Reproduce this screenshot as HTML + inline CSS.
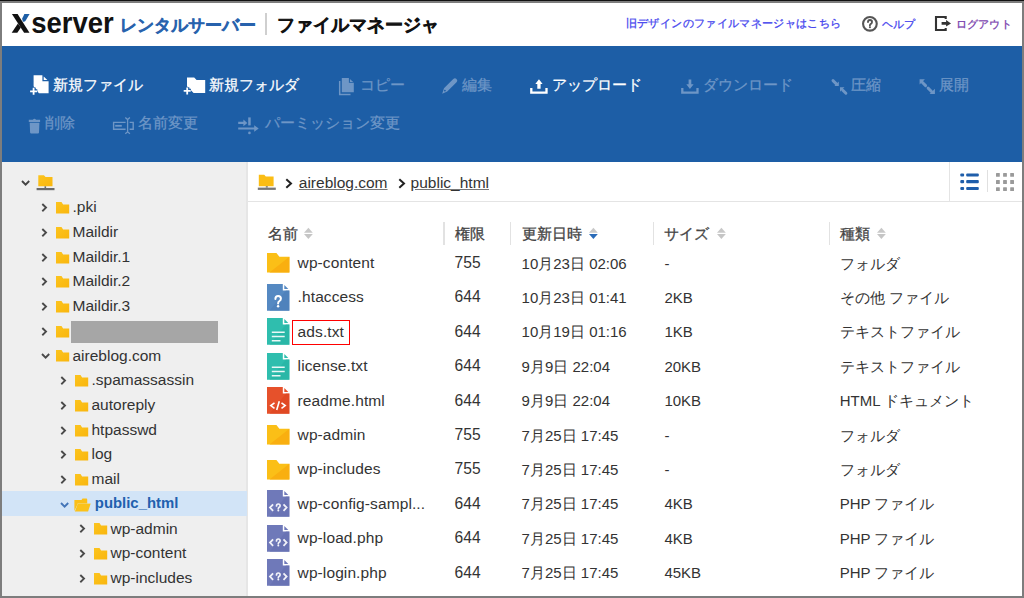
<!DOCTYPE html><html><head><meta charset="utf-8"><style>
*{margin:0;padding:0;box-sizing:border-box}
html,body{width:1024px;height:598px;overflow:hidden;background:#fff}
body{position:relative;font-family:"Liberation Sans",sans-serif}
.t{position:absolute;white-space:nowrap}
.a{position:absolute}
svg{position:absolute;overflow:visible}
</style></head><body>
<div class="a" style="left:0;top:0;width:1024px;height:598px;background:#fff"></div>
<svg width="0" height="0" style="position:absolute"><defs><linearGradient id="fg" x1="0" y1="0" x2="1" y2="1"><stop offset="0" stop-color="#fcc41e"/><stop offset="1" stop-color="#f9b60e"/></linearGradient></defs></svg>
<svg style="left:0;top:0" width="130" height="46" viewBox="0 0 130 46">
<path d="M11.9 14.1 L17.6 14.1 L29.5 32.8 L24.1 32.8 Z" fill="#111"/>
<path d="M11.7 32.8 L17.3 32.8 L20.9 27.4 L17.9 23.4 Z" fill="#111"/>
<path d="M24.4 14.1 L29.6 14.1 L25.4 20.9 Q24.0 22.4 22.8 21.2 L22.1 18.8 Z" fill="#1d5ea6"/>
<text x="31.2" y="32.8" font-family="Liberation Sans" font-weight="bold" font-size="28.6" fill="#111" textLength="82.5" lengthAdjust="spacingAndGlyphs">server</text>
</svg>
<div class="t" style="left:119.5px;top:17.11px;font-size:17px;line-height:17px;color:#2762ad;font-weight:normal;-webkit-text-stroke:1.1px #2762ad">レンタルサーバー</div>
<div class="a" style="left:264.5px;top:12.5px;width:2px;height:22px;background:#cfcfcf"></div>
<div class="t" style="left:276.5px;top:16.60px;font-size:17.6px;line-height:17.6px;color:#111;font-weight:normal;-webkit-text-stroke:1.2px #111">ファイルマネージャ</div>
<div class="t" style="left:625.8px;top:17.99px;font-size:11px;line-height:11px;color:#4747ee;font-weight:normal;letter-spacing:0.35px;-webkit-text-stroke:0.3px #4747ee">旧デザインのファイルマネージャはこちら</div>
<svg style="left:862px;top:16px" width="16" height="16" viewBox="0 0 16 16">
<circle cx="7.9" cy="7.8" r="6.85" fill="none" stroke="#555" stroke-width="2.1"/>
<path d="M6 6.1 Q6 4 7.95 4 Q10 4 10 5.9 Q10 7.2 8.9 7.8 Q7.9 8.4 7.9 9.5" fill="none" stroke="#555" stroke-width="1.9" stroke-linecap="round"/>
<circle cx="7.9" cy="11.3" r="1.05" fill="#555"/>
</svg>
<div class="t" style="left:881.5px;top:19.29px;font-size:11px;line-height:11px;color:#4747ee;font-weight:normal;letter-spacing:0.3px;-webkit-text-stroke:0.3px #4747ee">ヘルプ</div>
<svg style="left:934px;top:15px" width="18" height="17" viewBox="0 0 18 17">
<path d="M11.7 4 V2.05 H2 V15.05 H11.7 V13" fill="none" stroke="#333" stroke-width="2.1"/>
<path d="M7.6 7.1 H12.1 V4.9 L17 8.4 L12.1 11.6 V9.7 H7.6 Z" fill="#333"/>
</svg>
<div class="t" style="left:955.8px;top:19.29px;font-size:11px;line-height:11px;color:#7a3fae;font-weight:normal;letter-spacing:0.2px;-webkit-text-stroke:0.3px #7a3fae">ログアウト</div>
<div class="a" style="left:0;top:46px;width:1024px;height:116px;background:#1d5ea6"></div>
<svg style="left:29px;top:74px" width="22" height="22" viewBox="0 0 22 22">
<path d="M4.6 1.3 H13.4 V7.2 H19.6 V19.3 H9.9 L4.6 12.2 Z" fill="#fff"/>
<path d="M14.7 2.5 L18.4 6 H14.7 Z" fill="#fff"/>
<path d="M0.9 17.3 H8.3 M4.6 13.6 V21" stroke="#1d5ea6" stroke-width="4.2"/>
<path d="M1.1 17.3 H8.1 M4.6 13.8 V20.8" stroke="#fff" stroke-width="1.8"/>
</svg>
<div class="t" style="left:53px;top:77.30px;font-size:15px;line-height:15px;color:#fff;font-weight:normal;-webkit-text-stroke:0.25px #fff">新規ファイル</div>
<svg style="left:182px;top:74px" width="26" height="22" viewBox="0 0 26 22">
<path d="M5 3.4 H12.2 L14.6 6 H23.2 V18.9 H11.6 L5 12.2 Z" fill="#fff"/>
<path d="M1.5 16.9 H8.9 M5.2 13.2 V20.6" stroke="#1d5ea6" stroke-width="4.2"/>
<path d="M1.7 16.9 H8.7 M5.2 13.4 V20.4" stroke="#fff" stroke-width="1.8"/>
</svg>
<div class="t" style="left:209.3px;top:77.30px;font-size:15px;line-height:15px;color:#fff;font-weight:normal;-webkit-text-stroke:0.25px #fff">新規フォルダ</div>
<svg style="left:338px;top:77px" width="18" height="20" viewBox="0 0 18 20">
<path d="M1.7 4 V17.6 H12.5" fill="none" stroke="#6e96c6" stroke-width="1.5"/>
<path d="M3.8 1.1 H10.9 V5.8 H15.8 V15.3 H3.8 Z" fill="#6e96c6"/>
<path d="M11.9 1.9 L15.2 5 H11.9 Z" fill="#6e96c6"/>
</svg>
<div class="t" style="left:360px;top:77.30px;font-size:15px;line-height:15px;color:#6e96c6;font-weight:normal;-webkit-text-stroke:0.25px #6e96c6">コピー</div>
<svg style="left:441px;top:78px" width="18" height="18" viewBox="0 0 18 18">
<path d="M12.27 0.97 A2.3 2.3 0 0 1 15.53 4.23 L6.23 13.53 L1.2 15.8 L2.97 10.27 Z" fill="#6e96c6"/>
<circle cx="3.9" cy="12.6" r="0.9" fill="#1d5ea6"/>
</svg>
<div class="t" style="left:462px;top:77.30px;font-size:15px;line-height:15px;color:#6e96c6;font-weight:normal;-webkit-text-stroke:0.25px #6e96c6">編集</div>
<svg style="left:530px;top:79px" width="18" height="16" viewBox="0 0 18 16">
<path d="M1.3 8.9 V13.6 H16.5 V8.9" fill="none" stroke="#fff" stroke-width="2.3"/>
<path d="M5.3 5.1 L8.95 0.2 L12.6 5.1 H10.6 V9.7 H7.3 V5.1 Z" fill="#fff"/>
</svg>
<div class="t" style="left:552.4px;top:77.30px;font-size:15px;line-height:15px;color:#fff;font-weight:normal;-webkit-text-stroke:0.25px #fff">アップロード</div>
<svg style="left:680.5px;top:79px" width="18" height="16" viewBox="0 0 18 16">
<path d="M1.3 8.9 V13.6 H16.5 V8.9" fill="none" stroke="#6e96c6" stroke-width="2.3"/>
<path d="M5.3 5.2 L8.95 10.1 L12.6 5.2 H10.3 V0.6 H7.6 V5.2 Z" fill="#6e96c6"/>
</svg>
<div class="t" style="left:703.3px;top:77.30px;font-size:15px;line-height:15px;color:#6e96c6;font-weight:normal;-webkit-text-stroke:0.25px #6e96c6">ダウンロード</div>
<svg style="left:831px;top:78px" width="17" height="17" viewBox="0 0 17 17">
<path d="M2 2.6 L5.8 6.4 M14.9 15.3 L11.8 12.2" stroke="#6e96c6" stroke-width="2.9" stroke-linecap="round"/>
<path d="M7.8 3.6 V8 H3.4 Z M9 9.3 H13.5 L9 13.7 Z" fill="#6e96c6"/>
</svg>
<div class="t" style="left:851.3px;top:77.30px;font-size:15px;line-height:15px;color:#6e96c6;font-weight:normal;-webkit-text-stroke:0.25px #6e96c6">圧縮</div>
<svg style="left:919px;top:78px" width="17" height="17" viewBox="0 0 17 17">
<path d="M3.2 4.2 L6.6 7.6 M9.1 10.1 L12.5 13.5" stroke="#6e96c6" stroke-width="2.9" stroke-linecap="round"/>
<path d="M0.6 1.2 H5.9 L0.6 6.5 Z M15.9 10.8 V16.1 H10.6 Z" fill="#6e96c6"/>
</svg>
<div class="t" style="left:938.8px;top:77.30px;font-size:15px;line-height:15px;color:#6e96c6;font-weight:normal;-webkit-text-stroke:0.25px #6e96c6">展開</div>
<svg style="left:28px;top:117px" width="13" height="17" viewBox="0 0 13 17">
<path d="M0.8 2.8 H12.1 V5 H0.8 Z M4.8 2.8 Q6.45 0.6 8.1 2.8 Z" fill="#6e96c6"/>
<path d="M1.7 5.7 H11.4 L11 15.5 Q10.9 16.5 9.9 16.5 H3.2 Q2.2 16.5 2.1 15.5 Z" fill="#6e96c6"/>
</svg>
<div class="t" style="left:45px;top:115.30px;font-size:15px;line-height:15px;color:#6e96c6;font-weight:normal;-webkit-text-stroke:0.25px #6e96c6">削除</div>
<svg style="left:112px;top:117px" width="24" height="18" viewBox="0 0 24 18">
<path d="M13.6 5.4 H1.6 V12.3 H13.6 M17.6 5.4 H21.2 V12.3 H17.6" fill="none" stroke="#6e96c6" stroke-width="1.4"/>
<path d="M3.2 7.9 H9.8 V9.7 H3.2 Z" fill="#6e96c6"/>
<path d="M15.6 2.2 V15.2 M13.3 0.6 L15.6 2.6 L17.9 0.6 M13.3 16.8 L15.6 14.8 L17.9 16.8" fill="none" stroke="#6e96c6" stroke-width="1.3"/>
</svg>
<div class="t" style="left:138.4px;top:115.30px;font-size:15px;line-height:15px;color:#6e96c6;font-weight:normal;-webkit-text-stroke:0.25px #6e96c6">名前変更</div>
<svg style="left:237px;top:117px" width="23" height="18" viewBox="0 0 23 18">
<g fill="#6e96c6"><path d="M1.2 4.8 H7.5 V7 H1.2 Z M6.4 2.6 L10.3 5.9 L6.4 9.2 Z"/>
<rect x="11.2" y="0.4" width="2.5" height="8"/>
<path d="M1.2 10.4 H18 V12.6 H1.2 Z M17.2 8.2 L21.7 11.5 L17.2 14.8 Z"/>
<circle cx="12.45" cy="15.9" r="1.3"/></g>
</svg>
<div class="t" style="left:265px;top:115.30px;font-size:15px;line-height:15px;color:#6e96c6;font-weight:normal;-webkit-text-stroke:0.25px #6e96c6">パーミッション変更</div>
<div class="a" style="left:0;top:162px;width:247px;height:436px;background:#efefef"></div>
<div class="a" style="left:246px;top:162px;width:2px;height:436px;background:#e6e6e6"></div>
<div class="a" style="left:2px;top:490.86px;width:244.5px;height:24.72px;background:#d2e4f7"></div>
<svg style="left:21px;top:180.20px" width="10" height="6" viewBox="0 0 10 6">
<path d="M1 1 L4.6 4.6 L8.2 1" fill="none" stroke="#444" stroke-width="1.9"/></svg>
<svg style="left:36px;top:174px" width="20" height="18" viewBox="0 0 20 18">
<path d="M2.3 1.2 H7.9 L9.6 3.1 H16.5 V12.3 H2.3 Z" fill="url(#fg)"/>
<path d="M0.6 14 H18.5 V16.2 H0.6 Z" fill="#6a6a6a"/><path d="M8.5 12.3 H10.1 V14 H8.5Z" fill="#6a6a6a"/>
</svg>
<svg style="left:41.0px;top:203.12px" width="7" height="10" viewBox="0 0 7 10">
<path d="M1.3 1 L5 4.6 L1.3 8.2" fill="none" stroke="#4a4a4a" stroke-width="1.9"/></svg>
<svg style="left:55.7px;top:202.12px" width="14" height="12" viewBox="0 0 14 12">
<path d="M0 0 H5.5 L7.1 2.4 H13.2 V11.4 H0 Z" fill="url(#fg)"/></svg>
<div class="t" style="left:72.5px;top:199.20px;font-size:15.5px;line-height:15.5px;color:#333;font-weight:normal;">.pki</div>
<svg style="left:41.0px;top:227.84px" width="7" height="10" viewBox="0 0 7 10">
<path d="M1.3 1 L5 4.6 L1.3 8.2" fill="none" stroke="#4a4a4a" stroke-width="1.9"/></svg>
<svg style="left:55.7px;top:226.84px" width="14" height="12" viewBox="0 0 14 12">
<path d="M0 0 H5.5 L7.1 2.4 H13.2 V11.4 H0 Z" fill="url(#fg)"/></svg>
<div class="t" style="left:72.5px;top:223.92px;font-size:15.5px;line-height:15.5px;color:#333;font-weight:normal;">Maildir</div>
<svg style="left:41.0px;top:252.56px" width="7" height="10" viewBox="0 0 7 10">
<path d="M1.3 1 L5 4.6 L1.3 8.2" fill="none" stroke="#4a4a4a" stroke-width="1.9"/></svg>
<svg style="left:55.7px;top:251.56px" width="14" height="12" viewBox="0 0 14 12">
<path d="M0 0 H5.5 L7.1 2.4 H13.2 V11.4 H0 Z" fill="url(#fg)"/></svg>
<div class="t" style="left:72.5px;top:248.64px;font-size:15.5px;line-height:15.5px;color:#333;font-weight:normal;">Maildir.1</div>
<svg style="left:41.0px;top:277.28px" width="7" height="10" viewBox="0 0 7 10">
<path d="M1.3 1 L5 4.6 L1.3 8.2" fill="none" stroke="#4a4a4a" stroke-width="1.9"/></svg>
<svg style="left:55.7px;top:276.28px" width="14" height="12" viewBox="0 0 14 12">
<path d="M0 0 H5.5 L7.1 2.4 H13.2 V11.4 H0 Z" fill="url(#fg)"/></svg>
<div class="t" style="left:72.5px;top:273.36px;font-size:15.5px;line-height:15.5px;color:#333;font-weight:normal;">Maildir.2</div>
<svg style="left:41.0px;top:302.00px" width="7" height="10" viewBox="0 0 7 10">
<path d="M1.3 1 L5 4.6 L1.3 8.2" fill="none" stroke="#4a4a4a" stroke-width="1.9"/></svg>
<svg style="left:55.7px;top:301.00px" width="14" height="12" viewBox="0 0 14 12">
<path d="M0 0 H5.5 L7.1 2.4 H13.2 V11.4 H0 Z" fill="url(#fg)"/></svg>
<div class="t" style="left:72.5px;top:298.08px;font-size:15.5px;line-height:15.5px;color:#333;font-weight:normal;">Maildir.3</div>
<svg style="left:41.0px;top:326.72px" width="7" height="10" viewBox="0 0 7 10">
<path d="M1.3 1 L5 4.6 L1.3 8.2" fill="none" stroke="#4a4a4a" stroke-width="1.9"/></svg>
<svg style="left:55.7px;top:325.72px" width="14" height="12" viewBox="0 0 14 12">
<path d="M0 0 H5.5 L7.1 2.4 H13.2 V11.4 H0 Z" fill="url(#fg)"/></svg>
<div class="a" style="left:71px;top:321px;width:147px;height:21.8px;background:#a6a6a6"></div>
<svg style="left:40.5px;top:353.24px" width="10" height="6" viewBox="0 0 10 6">
<path d="M1 1 L4.6 4.6 L8.2 1" fill="none" stroke="#4a4a4a" stroke-width="1.9"/></svg>
<svg style="left:55.7px;top:350.44px" width="14" height="12" viewBox="0 0 14 12">
<path d="M0 0 H5.5 L7.1 2.4 H13.2 V11.4 H0 Z" fill="url(#fg)"/></svg>
<div class="t" style="left:72.5px;top:347.52px;font-size:15.5px;line-height:15.5px;color:#333;font-weight:normal;">aireblog.com</div>
<svg style="left:60.0px;top:376.16px" width="7" height="10" viewBox="0 0 7 10">
<path d="M1.3 1 L5 4.6 L1.3 8.2" fill="none" stroke="#4a4a4a" stroke-width="1.9"/></svg>
<svg style="left:74.7px;top:375.16px" width="14" height="12" viewBox="0 0 14 12">
<path d="M0 0 H5.5 L7.1 2.4 H13.2 V11.4 H0 Z" fill="url(#fg)"/></svg>
<div class="t" style="left:91.5px;top:372.24px;font-size:15.5px;line-height:15.5px;color:#333;font-weight:normal;">.spamassassin</div>
<svg style="left:60.0px;top:400.88px" width="7" height="10" viewBox="0 0 7 10">
<path d="M1.3 1 L5 4.6 L1.3 8.2" fill="none" stroke="#4a4a4a" stroke-width="1.9"/></svg>
<svg style="left:74.7px;top:399.88px" width="14" height="12" viewBox="0 0 14 12">
<path d="M0 0 H5.5 L7.1 2.4 H13.2 V11.4 H0 Z" fill="url(#fg)"/></svg>
<div class="t" style="left:91.5px;top:396.96px;font-size:15.5px;line-height:15.5px;color:#333;font-weight:normal;">autoreply</div>
<svg style="left:60.0px;top:425.60px" width="7" height="10" viewBox="0 0 7 10">
<path d="M1.3 1 L5 4.6 L1.3 8.2" fill="none" stroke="#4a4a4a" stroke-width="1.9"/></svg>
<svg style="left:74.7px;top:424.60px" width="14" height="12" viewBox="0 0 14 12">
<path d="M0 0 H5.5 L7.1 2.4 H13.2 V11.4 H0 Z" fill="url(#fg)"/></svg>
<div class="t" style="left:91.5px;top:421.68px;font-size:15.5px;line-height:15.5px;color:#333;font-weight:normal;">htpasswd</div>
<svg style="left:60.0px;top:450.32px" width="7" height="10" viewBox="0 0 7 10">
<path d="M1.3 1 L5 4.6 L1.3 8.2" fill="none" stroke="#4a4a4a" stroke-width="1.9"/></svg>
<svg style="left:74.7px;top:449.32px" width="14" height="12" viewBox="0 0 14 12">
<path d="M0 0 H5.5 L7.1 2.4 H13.2 V11.4 H0 Z" fill="url(#fg)"/></svg>
<div class="t" style="left:91.5px;top:446.40px;font-size:15.5px;line-height:15.5px;color:#333;font-weight:normal;">log</div>
<svg style="left:60.0px;top:475.04px" width="7" height="10" viewBox="0 0 7 10">
<path d="M1.3 1 L5 4.6 L1.3 8.2" fill="none" stroke="#4a4a4a" stroke-width="1.9"/></svg>
<svg style="left:74.7px;top:474.04px" width="14" height="12" viewBox="0 0 14 12">
<path d="M0 0 H5.5 L7.1 2.4 H13.2 V11.4 H0 Z" fill="url(#fg)"/></svg>
<div class="t" style="left:91.5px;top:471.12px;font-size:15.5px;line-height:15.5px;color:#333;font-weight:normal;">mail</div>
<svg style="left:59.5px;top:501.56px" width="10" height="6" viewBox="0 0 10 6">
<path d="M1 1 L4.6 4.6 L8.2 1" fill="none" stroke="#4475b8" stroke-width="1.9"/></svg>
<svg style="left:74px;top:497.36px" width="18" height="16" viewBox="0 0 18 16">
<path d="M0.4 3 H7.6 Q8 1.6 9 1.6 H12.4 Q13.2 1.6 13.2 2.6 V6.8 H3.8 L0.4 14 Z" fill="#fbbf17"/>
<path d="M3.6 6.2 H16.8 L16.6 6.8 H3.4 Z" fill="#f3dc8c"/>
<path d="M3.8 6.8 H16.6 L14.1 14.4 H0.9 Z" fill="#fbc21a"/></svg>
<div class="t" style="left:94.8px;top:496.35px;font-size:14.9px;line-height:14.9px;color:#2160ae;font-weight:bold;">public_html</div>
<svg style="left:79.0px;top:524.48px" width="7" height="10" viewBox="0 0 7 10">
<path d="M1.3 1 L5 4.6 L1.3 8.2" fill="none" stroke="#4a4a4a" stroke-width="1.9"/></svg>
<svg style="left:93.7px;top:523.48px" width="14" height="12" viewBox="0 0 14 12">
<path d="M0 0 H5.5 L7.1 2.4 H13.2 V11.4 H0 Z" fill="url(#fg)"/></svg>
<div class="t" style="left:110.5px;top:520.56px;font-size:15.5px;line-height:15.5px;color:#333;font-weight:normal;">wp-admin</div>
<svg style="left:79.0px;top:549.20px" width="7" height="10" viewBox="0 0 7 10">
<path d="M1.3 1 L5 4.6 L1.3 8.2" fill="none" stroke="#4a4a4a" stroke-width="1.9"/></svg>
<svg style="left:93.7px;top:548.20px" width="14" height="12" viewBox="0 0 14 12">
<path d="M0 0 H5.5 L7.1 2.4 H13.2 V11.4 H0 Z" fill="url(#fg)"/></svg>
<div class="t" style="left:110.5px;top:545.28px;font-size:15.5px;line-height:15.5px;color:#333;font-weight:normal;">wp-content</div>
<svg style="left:79.0px;top:573.92px" width="7" height="10" viewBox="0 0 7 10">
<path d="M1.3 1 L5 4.6 L1.3 8.2" fill="none" stroke="#4a4a4a" stroke-width="1.9"/></svg>
<svg style="left:93.7px;top:572.92px" width="14" height="12" viewBox="0 0 14 12">
<path d="M0 0 H5.5 L7.1 2.4 H13.2 V11.4 H0 Z" fill="url(#fg)"/></svg>
<div class="t" style="left:110.5px;top:570.00px;font-size:15.5px;line-height:15.5px;color:#333;font-weight:normal;">wp-includes</div>
<svg style="left:257px;top:174px" width="20" height="18" viewBox="0 0 20 18">
<path d="M1.8 0.8 H7.3 L8.8 2.4 H16.6 V12.2 H1.8 Z" fill="#fbbd15"/>
<path d="M0.8 13.6 H18.8 V15.9 H0.8 Z" fill="#777"/><path d="M8.8 12.2 H10.8 V13.6 H8.8Z" fill="#777"/>
</svg>
<svg style="left:285px;top:178px" width="9" height="11" viewBox="0 0 9 11">
<path d="M1.3 1.2 L6 5.5 L1.3 9.8" fill="none" stroke="#222" stroke-width="2"/></svg>
<div class="t" style="left:298.8px;top:174.88px;font-size:15.5px;line-height:15.5px;color:#333;font-weight:normal;text-decoration:underline;text-decoration-color:#777;text-underline-offset:1px">aireblog.com</div>
<svg style="left:397.5px;top:178px" width="9" height="11" viewBox="0 0 9 11">
<path d="M1.3 1.2 L6 5.5 L1.3 9.8" fill="none" stroke="#222" stroke-width="2"/></svg>
<div class="t" style="left:410.6px;top:174.88px;font-size:15.5px;line-height:15.5px;color:#333;font-weight:normal;text-decoration:underline;text-decoration-color:#777;text-underline-offset:1px">public_html</div>
<div class="a" style="left:248px;top:200.6px;width:774px;height:1.4px;background:#e4e4e4"></div>
<div class="a" style="left:949px;top:162px;width:1.4px;height:39px;background:#e4e4e4"></div>
<div class="a" style="left:986.8px;top:170px;width:1.2px;height:22px;background:#e0e0e0"></div>
<svg style="left:960px;top:173px" width="20" height="18" viewBox="0 0 20 18">
<g fill="#1f5eaa"><rect x="0.3" y="0.4" width="3.8" height="3.2" rx="1"/><rect x="0.3" y="7.1" width="3.8" height="3.2" rx="1"/><rect x="0.3" y="13.9" width="3.8" height="3.2" rx="1"/>
<rect x="6.2" y="0.4" width="12.6" height="3.2" rx="1"/><rect x="6.2" y="7.1" width="12.6" height="3.2" rx="1"/><rect x="6.2" y="13.9" width="12.6" height="3.2" rx="1"/></g></svg>
<svg style="left:996px;top:173px" width="19" height="18" viewBox="0 0 19 18">
<g fill="#9a9a9a"><rect x="0.0" y="0.0" width="3.8" height="3.8" rx="0.5"/><rect x="7.1" y="0.0" width="3.8" height="3.8" rx="0.5"/><rect x="14.2" y="0.0" width="3.8" height="3.8" rx="0.5"/><rect x="0.0" y="7.1" width="3.8" height="3.8" rx="0.5"/><rect x="7.1" y="7.1" width="3.8" height="3.8" rx="0.5"/><rect x="14.2" y="7.1" width="3.8" height="3.8" rx="0.5"/><rect x="0.0" y="14.2" width="3.8" height="3.8" rx="0.5"/><rect x="7.1" y="14.2" width="3.8" height="3.8" rx="0.5"/><rect x="14.2" y="14.2" width="3.8" height="3.8" rx="0.5"/></g></svg>
<div class="a" style="left:443.3px;top:221.8px;width:1.4px;height:23.5px;background:#e2e2e2"></div>
<div class="a" style="left:510.1px;top:221.8px;width:1.4px;height:23.5px;background:#e2e2e2"></div>
<div class="a" style="left:653.0px;top:221.8px;width:1.4px;height:23.5px;background:#e2e2e2"></div>
<div class="a" style="left:828.6999999999999px;top:221.8px;width:1.4px;height:23.5px;background:#e2e2e2"></div>
<div class="t" style="left:267.7px;top:225.50px;font-size:15px;line-height:15px;color:#444;font-weight:normal;-webkit-text-stroke:0.3px #444">名前</div>
<svg style="left:303.9px;top:227px" width="9" height="13" viewBox="0 0 9 13">
<path d="M0 5.7 L4.4 0.7 L8.8 5.7 Z" fill="#c8c8c8"/><path d="M0 7 L4.4 12 L8.8 7 Z" fill="#c5c5c5"/></svg>
<div class="t" style="left:455.2px;top:225.50px;font-size:15px;line-height:15px;color:#444;font-weight:normal;-webkit-text-stroke:0.3px #444">権限</div>
<div class="t" style="left:521.6px;top:225.50px;font-size:15px;line-height:15px;color:#444;font-weight:normal;-webkit-text-stroke:0.3px #444">更新日時</div>
<svg style="left:588.5px;top:227px" width="9" height="13" viewBox="0 0 9 13">
<path d="M0 5.7 L4.4 0.7 L8.8 5.7 Z" fill="#c8c8c8"/><path d="M0 7 L4.4 12 L8.8 7 Z" fill="#2a6bb8"/></svg>
<div class="t" style="left:664.4px;top:225.50px;font-size:15px;line-height:15px;color:#444;font-weight:normal;-webkit-text-stroke:0.3px #444">サイズ</div>
<svg style="left:716.6px;top:227px" width="9" height="13" viewBox="0 0 9 13">
<path d="M0 5.7 L4.4 0.7 L8.8 5.7 Z" fill="#c8c8c8"/><path d="M0 7 L4.4 12 L8.8 7 Z" fill="#c5c5c5"/></svg>
<div class="t" style="left:839.7px;top:225.50px;font-size:15px;line-height:15px;color:#444;font-weight:normal;-webkit-text-stroke:0.3px #444">種類</div>
<svg style="left:876.6px;top:227px" width="9" height="13" viewBox="0 0 9 13">
<path d="M0 5.7 L4.4 0.7 L8.8 5.7 Z" fill="#c8c8c8"/><path d="M0 7 L4.4 12 L8.8 7 Z" fill="#c5c5c5"/></svg>
<svg style="left:267px;top:253.20px" width="23" height="20" viewBox="0 0 23 20">
<path d="M0 0 H9.4 L12.4 3.7 H22.4 V19.4 H0 Z" fill="#fbbf17"/>
<path d="M22.4 3.7 V19.4 H2.5 Z" fill="#f9af10"/></svg>
<div class="t" style="left:297.6px;top:255.08px;font-size:15.5px;line-height:15.5px;color:#333;font-weight:normal;letter-spacing:0.1px">wp-content</div>
<div class="t" style="left:454.6px;top:254.99px;font-size:15.6px;line-height:15.6px;color:#333;font-weight:normal;">755</div>
<div class="t" style="left:521.6px;top:255.50px;font-size:15px;line-height:15px;color:#333;font-weight:normal;">10月23日 02:06</div>
<div class="t" style="left:664.4px;top:255.50px;font-size:15px;line-height:15px;color:#333;font-weight:normal;">-</div>
<div class="t" style="left:839.7px;top:255.50px;font-size:15px;line-height:15px;color:#333;font-weight:normal;">フォルダ</div>
<svg style="left:267px;top:283.90px" width="23" height="27" viewBox="0 0 23 27">
<path d="M0 0 H15.8 V6.5 H22.4 V26.8 H0 Z" fill="#5589c2"/>
<path d="M22.4 6.5 V26.8 H2.5 L19 6.5 Z" fill="#4b7db8" opacity="0.6"/>
<path d="M17.3 1.1 V5 H21.3 Z" fill="#5589c2"/>
<path d="M8.4 15 Q8.4 12 11.1 12 Q13.9 12 13.9 14.6 Q13.9 16.2 12.5 17 Q11.1 17.8 11.1 19.4" fill="none" stroke="#fff" stroke-width="2" stroke-linecap="round"/><circle cx="11.1" cy="22.2" r="1.2" fill="#fff"/></svg>
<div class="t" style="left:297.6px;top:289.48px;font-size:15.5px;line-height:15.5px;color:#333;font-weight:normal;letter-spacing:0.1px">.htaccess</div>
<div class="t" style="left:454.6px;top:289.39px;font-size:15.6px;line-height:15.6px;color:#333;font-weight:normal;">644</div>
<div class="t" style="left:521.6px;top:289.90px;font-size:15px;line-height:15px;color:#333;font-weight:normal;">10月23日 01:41</div>
<div class="t" style="left:664.4px;top:289.90px;font-size:15px;line-height:15px;color:#333;font-weight:normal;">2KB</div>
<div class="t" style="left:839.7px;top:289.90px;font-size:15px;line-height:15px;color:#333;font-weight:normal;">その他 ファイル</div>
<svg style="left:267px;top:318.30px" width="23" height="27" viewBox="0 0 23 27">
<path d="M0 0 H15.8 V6.5 H22.4 V26.8 H0 Z" fill="#2fbeae"/>
<path d="M22.4 6.5 V26.8 H2.5 L19 6.5 Z" fill="#27b2a2" opacity="0.6"/>
<path d="M17.3 1.1 V5 H21.3 Z" fill="#2fbeae"/>
<path d="M4.8 14.3 H17.7 M4.8 18.5 H17.7 M4.8 22.7 H13.5" stroke="#fff" stroke-width="1.6" opacity="0.9"/></svg>
<div class="t" style="left:297.6px;top:323.88px;font-size:15.5px;line-height:15.5px;color:#333;font-weight:normal;letter-spacing:0.1px">ads.txt</div>
<div class="t" style="left:454.6px;top:323.79px;font-size:15.6px;line-height:15.6px;color:#333;font-weight:normal;">644</div>
<div class="t" style="left:521.6px;top:324.30px;font-size:15px;line-height:15px;color:#333;font-weight:normal;">10月19日 01:16</div>
<div class="t" style="left:664.4px;top:324.30px;font-size:15px;line-height:15px;color:#333;font-weight:normal;">1KB</div>
<div class="t" style="left:839.7px;top:324.30px;font-size:15px;line-height:15px;color:#333;font-weight:normal;">テキストファイル</div>
<svg style="left:267px;top:352.70px" width="23" height="27" viewBox="0 0 23 27">
<path d="M0 0 H15.8 V6.5 H22.4 V26.8 H0 Z" fill="#2fbeae"/>
<path d="M22.4 6.5 V26.8 H2.5 L19 6.5 Z" fill="#27b2a2" opacity="0.6"/>
<path d="M17.3 1.1 V5 H21.3 Z" fill="#2fbeae"/>
<path d="M4.8 14.3 H17.7 M4.8 18.5 H17.7 M4.8 22.7 H13.5" stroke="#fff" stroke-width="1.6" opacity="0.9"/></svg>
<div class="t" style="left:297.6px;top:358.28px;font-size:15.5px;line-height:15.5px;color:#333;font-weight:normal;letter-spacing:0.1px">license.txt</div>
<div class="t" style="left:454.6px;top:358.19px;font-size:15.6px;line-height:15.6px;color:#333;font-weight:normal;">644</div>
<div class="t" style="left:521.6px;top:358.70px;font-size:15px;line-height:15px;color:#333;font-weight:normal;">9月9日 22:04</div>
<div class="t" style="left:664.4px;top:358.70px;font-size:15px;line-height:15px;color:#333;font-weight:normal;">20KB</div>
<div class="t" style="left:839.7px;top:358.70px;font-size:15px;line-height:15px;color:#333;font-weight:normal;">テキストファイル</div>
<svg style="left:267px;top:387.10px" width="23" height="27" viewBox="0 0 23 27">
<path d="M0 0 H15.8 V6.5 H22.4 V26.8 H0 Z" fill="#e6512b"/>
<path d="M22.4 6.5 V26.8 H2.5 L19 6.5 Z" fill="#dc4420" opacity="0.6"/>
<path d="M17.3 1.1 V5 H21.3 Z" fill="#e6512b"/>
<path d="M7.5 15.8 L3.8 18.6 L7.5 21.4 M14.5 15.8 L18.2 18.6 L14.5 21.4 M12.3 14.2 L9.7 23" fill="none" stroke="#fff" stroke-width="1.6"/></svg>
<div class="t" style="left:297.6px;top:392.68px;font-size:15.5px;line-height:15.5px;color:#333;font-weight:normal;letter-spacing:0.1px">readme.html</div>
<div class="t" style="left:454.6px;top:392.59px;font-size:15.6px;line-height:15.6px;color:#333;font-weight:normal;">644</div>
<div class="t" style="left:521.6px;top:393.10px;font-size:15px;line-height:15px;color:#333;font-weight:normal;">9月9日 22:04</div>
<div class="t" style="left:664.4px;top:393.10px;font-size:15px;line-height:15px;color:#333;font-weight:normal;">10KB</div>
<div class="t" style="left:839.7px;top:393.10px;font-size:15px;line-height:15px;color:#333;font-weight:normal;">HTML ドキュメント</div>
<svg style="left:267px;top:425.20px" width="23" height="20" viewBox="0 0 23 20">
<path d="M0 0 H9.4 L12.4 3.7 H22.4 V19.4 H0 Z" fill="#fbbf17"/>
<path d="M22.4 3.7 V19.4 H2.5 Z" fill="#f9af10"/></svg>
<div class="t" style="left:297.6px;top:427.08px;font-size:15.5px;line-height:15.5px;color:#333;font-weight:normal;letter-spacing:0.1px">wp-admin</div>
<div class="t" style="left:454.6px;top:426.99px;font-size:15.6px;line-height:15.6px;color:#333;font-weight:normal;">755</div>
<div class="t" style="left:521.6px;top:427.50px;font-size:15px;line-height:15px;color:#333;font-weight:normal;">7月25日 17:45</div>
<div class="t" style="left:664.4px;top:427.50px;font-size:15px;line-height:15px;color:#333;font-weight:normal;">-</div>
<div class="t" style="left:839.7px;top:427.50px;font-size:15px;line-height:15px;color:#333;font-weight:normal;">フォルダ</div>
<svg style="left:267px;top:459.60px" width="23" height="20" viewBox="0 0 23 20">
<path d="M0 0 H9.4 L12.4 3.7 H22.4 V19.4 H0 Z" fill="#fbbf17"/>
<path d="M22.4 3.7 V19.4 H2.5 Z" fill="#f9af10"/></svg>
<div class="t" style="left:297.6px;top:461.48px;font-size:15.5px;line-height:15.5px;color:#333;font-weight:normal;letter-spacing:0.1px">wp-includes</div>
<div class="t" style="left:454.6px;top:461.39px;font-size:15.6px;line-height:15.6px;color:#333;font-weight:normal;">755</div>
<div class="t" style="left:521.6px;top:461.90px;font-size:15px;line-height:15px;color:#333;font-weight:normal;">7月25日 17:45</div>
<div class="t" style="left:664.4px;top:461.90px;font-size:15px;line-height:15px;color:#333;font-weight:normal;">-</div>
<div class="t" style="left:839.7px;top:461.90px;font-size:15px;line-height:15px;color:#333;font-weight:normal;">フォルダ</div>
<svg style="left:267px;top:490.30px" width="23" height="27" viewBox="0 0 23 27">
<path d="M0 0 H15.8 V6.5 H22.4 V26.8 H0 Z" fill="#6f79b9"/>
<path d="M22.4 6.5 V26.8 H2.5 L19 6.5 Z" fill="#6670b0" opacity="0.6"/>
<path d="M17.3 1.1 V5 H21.3 Z" fill="#6f79b9"/>
<path d="M6.1 14.4 L3 17.6 L6.1 20.8 M16.5 14.4 L19.6 17.6 L16.5 20.8" fill="none" stroke="#fff" stroke-width="1.8" opacity="0.9"/><path d="M9.5 15.9 Q9.5 14 11.3 14 Q13.1 14 13.1 15.7 Q13.1 16.8 12.1 17.3 Q11.3 17.8 11.3 18.7" fill="none" stroke="#fff" stroke-width="1.7" stroke-linecap="round" opacity="0.9"/><circle cx="11.3" cy="20.6" r="1" fill="#fff" opacity="0.9"/></svg>
<div class="t" style="left:297.6px;top:495.88px;font-size:15.5px;line-height:15.5px;color:#333;font-weight:normal;letter-spacing:0.1px">wp-config-sampl...</div>
<div class="t" style="left:454.6px;top:495.79px;font-size:15.6px;line-height:15.6px;color:#333;font-weight:normal;">644</div>
<div class="t" style="left:521.6px;top:496.30px;font-size:15px;line-height:15px;color:#333;font-weight:normal;">7月25日 17:45</div>
<div class="t" style="left:664.4px;top:496.30px;font-size:15px;line-height:15px;color:#333;font-weight:normal;">4KB</div>
<div class="t" style="left:839.7px;top:496.30px;font-size:15px;line-height:15px;color:#333;font-weight:normal;">PHP ファイル</div>
<svg style="left:267px;top:524.70px" width="23" height="27" viewBox="0 0 23 27">
<path d="M0 0 H15.8 V6.5 H22.4 V26.8 H0 Z" fill="#6f79b9"/>
<path d="M22.4 6.5 V26.8 H2.5 L19 6.5 Z" fill="#6670b0" opacity="0.6"/>
<path d="M17.3 1.1 V5 H21.3 Z" fill="#6f79b9"/>
<path d="M6.1 14.4 L3 17.6 L6.1 20.8 M16.5 14.4 L19.6 17.6 L16.5 20.8" fill="none" stroke="#fff" stroke-width="1.8" opacity="0.9"/><path d="M9.5 15.9 Q9.5 14 11.3 14 Q13.1 14 13.1 15.7 Q13.1 16.8 12.1 17.3 Q11.3 17.8 11.3 18.7" fill="none" stroke="#fff" stroke-width="1.7" stroke-linecap="round" opacity="0.9"/><circle cx="11.3" cy="20.6" r="1" fill="#fff" opacity="0.9"/></svg>
<div class="t" style="left:297.6px;top:530.28px;font-size:15.5px;line-height:15.5px;color:#333;font-weight:normal;letter-spacing:0.1px">wp-load.php</div>
<div class="t" style="left:454.6px;top:530.19px;font-size:15.6px;line-height:15.6px;color:#333;font-weight:normal;">644</div>
<div class="t" style="left:521.6px;top:530.70px;font-size:15px;line-height:15px;color:#333;font-weight:normal;">7月25日 17:45</div>
<div class="t" style="left:664.4px;top:530.70px;font-size:15px;line-height:15px;color:#333;font-weight:normal;">4KB</div>
<div class="t" style="left:839.7px;top:530.70px;font-size:15px;line-height:15px;color:#333;font-weight:normal;">PHP ファイル</div>
<svg style="left:267px;top:559.10px" width="23" height="27" viewBox="0 0 23 27">
<path d="M0 0 H15.8 V6.5 H22.4 V26.8 H0 Z" fill="#6f79b9"/>
<path d="M22.4 6.5 V26.8 H2.5 L19 6.5 Z" fill="#6670b0" opacity="0.6"/>
<path d="M17.3 1.1 V5 H21.3 Z" fill="#6f79b9"/>
<path d="M6.1 14.4 L3 17.6 L6.1 20.8 M16.5 14.4 L19.6 17.6 L16.5 20.8" fill="none" stroke="#fff" stroke-width="1.8" opacity="0.9"/><path d="M9.5 15.9 Q9.5 14 11.3 14 Q13.1 14 13.1 15.7 Q13.1 16.8 12.1 17.3 Q11.3 17.8 11.3 18.7" fill="none" stroke="#fff" stroke-width="1.7" stroke-linecap="round" opacity="0.9"/><circle cx="11.3" cy="20.6" r="1" fill="#fff" opacity="0.9"/></svg>
<div class="t" style="left:297.6px;top:564.68px;font-size:15.5px;line-height:15.5px;color:#333;font-weight:normal;letter-spacing:0.1px">wp-login.php</div>
<div class="t" style="left:454.6px;top:564.59px;font-size:15.6px;line-height:15.6px;color:#333;font-weight:normal;">644</div>
<div class="t" style="left:521.6px;top:565.10px;font-size:15px;line-height:15px;color:#333;font-weight:normal;">7月25日 17:45</div>
<div class="t" style="left:664.4px;top:565.10px;font-size:15px;line-height:15px;color:#333;font-weight:normal;">45KB</div>
<div class="t" style="left:839.7px;top:565.10px;font-size:15px;line-height:15px;color:#333;font-weight:normal;">PHP ファイル</div>
<div class="a" style="left:292px;top:319.8px;width:57.8px;height:25px;border:1.6px solid #f00"></div>
<div class="a" style="left:0;top:0;width:1024px;height:1px;background:#111"></div>
<div class="a" style="left:0;top:1px;width:1024px;height:2px;background:#7d7d7d"></div>
<div class="a" style="left:0;top:0;width:2px;height:598px;background:#7d7d7d"></div>
<div class="a" style="left:1022px;top:0;width:2px;height:598px;background:#7d7d7d"></div>
<div class="a" style="left:0;top:596px;width:1024px;height:2px;background:#7d7d7d"></div>
<div class="a" style="left:0;top:0;width:1024px;height:1px;background:#111"></div>
</body></html>
